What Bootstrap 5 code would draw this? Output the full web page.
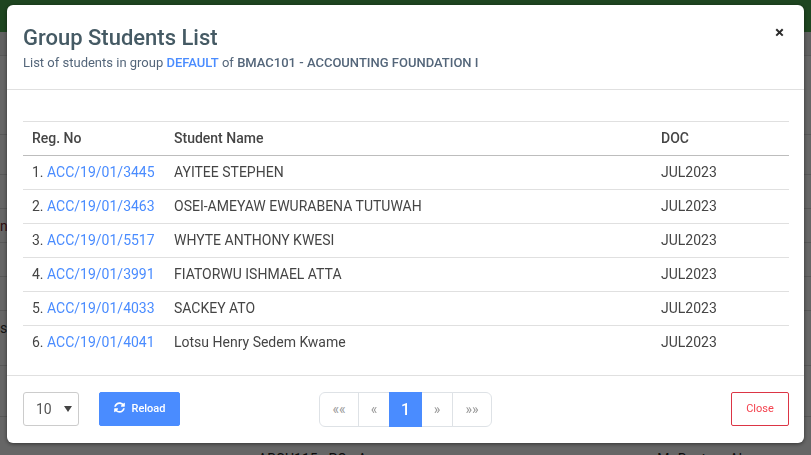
<!DOCTYPE html>
<html lang="en">
<head>
<meta charset="utf-8">
<title>Group Students List</title>
<link rel="stylesheet" href="https://cdn.jsdelivr.net/npm/bootstrap@5.3.0/dist/css/bootstrap.min.css">
<style>
html,body{height:455px;overflow:hidden;background:#fff;font-family:Roboto,"Liberation Sans",sans-serif;}
.pg-top{height:32px;background:#4bad50;}
.pg-strip{height:24px;border-bottom:1px solid #ddd;background:#f2f2f2;}
.pg-rows>div{border-bottom:1px solid #ddd;color:#333;font-size:14px;line-height:18px;white-space:nowrap;overflow:hidden;}
.pg-rows .h1x{height:79px;} .pg-rows .h2x{height:40px;} .pg-rows .h3x{height:34px;} .pg-rows .h4x{height:55px;} .pg-rows .h5x{height:51px;}
.pg-cut{padding-top:8px;}
.pg-cut span{color:#7a1f2a;}
.pg-last{display:flex;padding:32px 0 0 258px;font-size:14px;color:#222;white-space:nowrap;}
.pg-last span:last-child{margin-left:283px;}
.modal-backdrop.show{opacity:.6;}
.dlg.modal-dialog{max-width:797px;width:797px;margin:5px auto 0;}
.dlg .modal-content{height:438px;border:0;border-radius:6px;box-shadow:0 1px 4px rgba(0,0,0,.5);}
.dlg .modal-header{height:85px;padding:0 16px;align-items:flex-start;border-bottom:1px solid #e0e0e0;}
.dlg-title{margin:19px 0 0;font-size:22px;font-weight:500;line-height:28px;color:#455a64;}
.dlg-sub{margin:2px 0 0;font-size:13px;line-height:18px;color:#54667a;}
.dlg-sub b{font-weight:500;}
.dlg-sub .grp{color:#4a8cff;}
.dlg-x{border:0;background:none;padding:0;margin:17px 4px 0 0;color:#2b2b2b;font-size:17px;font-weight:700;line-height:20px;}
.dlg .modal-body{padding:31px 16px 0;flex:1 1 auto;}
.stud{margin:0;font-size:14px;color:#454545;table-layout:fixed;width:766px;}
.stud th,.stud td{padding:0 9px 2px;height:34px;vertical-align:middle;border-top:1px solid #e0e0e0;border-bottom:0;font-weight:400;line-height:20px;}
.stud thead th{font-weight:500;color:#454545;height:34px;border-bottom:1px solid #bdbdbd;}
.stud a{color:#4a8cff;text-decoration:none;}
.dlg .modal-footer{display:grid;grid-template-columns:1fr auto 1fr;padding:16px 16px 0;height:68px;align-items:start;border-top:1px solid #e0e0e0;margin:0;}
.dlg .modal-footer>*{margin:0;}
.sel{width:56px;height:34px;padding:0 0 0 12px;font-size:14px;color:#555;border:1px solid #ccc;border-radius:3px;appearance:none;background:#fff url("data:image/svg+xml,%3Csvg xmlns='http://www.w3.org/2000/svg' width='8' height='6'%3E%3Cpath d='M0 0h8L4 6z' fill='%23444'/%3E%3C/svg%3E") no-repeat right 6px center;}
.foot-l{gap:20px;}
.rl{width:81px;height:34px;padding:0;background:#4a8cff;border:1px solid #4a8cff;color:#fff;font-size:11px;font-weight:500;border-radius:2px;}
.rl svg{width:11px;height:11px;margin:-2px 7px 0 0;vertical-align:middle;fill:#fff;}
.pgr{margin:0;}
.pgr .page-link{height:35px;display:flex;align-items:center;justify-content:center;padding:0;font-size:14px;color:#999;border-color:#dee2e6;}
.pgr .pw1 .page-link{width:40px;} .pgr .pw2 .page-link{width:32px;}
.pgr .active .page-link{width:33px;background:#4a8cff;border-color:#4a8cff;color:#fff;font-size:16px;font-weight:500;}
.cl{width:58px;height:34px;padding:0;margin-right:-1px;background:#fff;border:1px solid #dc3545;color:#f4434f;font-size:11px;border-radius:2px;}
</style>
</head>
<body>
<div class="pg-top"></div>
<div class="pg-strip"></div>
<div class="pg-rows">
<div class="h1x"></div>
<div class="h2x"></div>
<div class="h3x"></div>
<div class="h3x pg-cut"><span>n</span></div>
<div class="h3x"></div>
<div class="h3x"></div>
<div class="h4x pg-cut">s</div>
<div class="h5x"></div>
</div>
<div class="pg-last"><span>ABCU115 - PO - Ac</span><span>Mr Bentum Abeam</span></div>

<div class="modal-backdrop fade show"></div>
<div class="modal fade show d-block" tabindex="-1" role="dialog">
<div class="modal-dialog dlg">
<div class="modal-content">
<div class="modal-header">
<div class="flex-grow-1">
<h4 class="dlg-title">Group Students List</h4>
<p class="dlg-sub">List of students in group <b class="grp">DEFAULT</b> of <b>BMAC101 - ACCOUNTING FOUNDATION I</b></p>
</div>
<button type="button" class="dlg-x" aria-label="Close">×</button>
</div>
<div class="modal-body">
<table class="table stud">
<colgroup><col style="width:142px"><col style="width:487px"><col style="width:137px"></colgroup>
<thead><tr><th>Reg. No</th><th>Student Name</th><th>DOC</th></tr></thead>
<tbody>
<tr><td>1. <a href="#">ACC/19/01/3445</a></td><td>AYITEE STEPHEN</td><td>JUL2023</td></tr>
<tr><td>2. <a href="#">ACC/19/01/3463</a></td><td>OSEI-AMEYAW EWURABENA TUTUWAH</td><td>JUL2023</td></tr>
<tr><td>3. <a href="#">ACC/19/01/5517</a></td><td>WHYTE ANTHONY KWESI</td><td>JUL2023</td></tr>
<tr><td>4. <a href="#">ACC/19/01/3991</a></td><td>FIATORWU ISHMAEL ATTA</td><td>JUL2023</td></tr>
<tr><td>5. <a href="#">ACC/19/01/4033</a></td><td>SACKEY ATO</td><td>JUL2023</td></tr>
<tr><td>6. <a href="#">ACC/19/01/4041</a></td><td>Lotsu Henry Sedem Kwame</td><td>JUL2023</td></tr>
</tbody>
</table>
</div>
<div class="modal-footer">
<div class="d-flex foot-l justify-content-start">
<select class="sel" aria-label="Rows"><option>10</option><option>25</option></select>
<button type="button" class="btn rl"><svg viewBox="0 0 512 512"><path d="M370.72 133.28C339.458 104.008 298.888 87.962 255.848 88c-77.458.068-144.328 53.178-162.791 126.85-1.344 5.363-6.122 9.15-11.651 9.15H24.103c-7.498 0-13.194-6.807-11.807-14.176C33.933 94.924 134.813 8 256 8c66.448 0 126.791 26.136 171.315 68.685L463.03 40.97C478.149 25.851 504 36.559 504 57.941V192c0 13.255-10.745 24-24 24H345.941c-21.382 0-32.09-25.851-16.971-40.971l41.75-41.749zM32 296h134.059c21.382 0 32.09 25.851 16.971 40.971l-41.75 41.75c31.262 29.273 71.835 45.319 114.876 45.28 77.418-.07 144.315-53.144 162.787-126.849 1.344-5.363 6.122-9.15 11.651-9.15h57.304c7.498 0 13.194 6.807 11.807 14.176C478.067 417.076 377.187 504 256 504c-66.448 0-126.791-26.136-171.315-68.685L48.97 471.03C33.851 486.149 8 475.441 8 454.059V320c0-13.255 10.745-24 24-24z"/></svg>Reload</button>
</div>
<ul class="pagination pgr">
<li class="page-item pw1"><a class="page-link" href="#">««</a></li>
<li class="page-item pw2"><a class="page-link" href="#">«</a></li>
<li class="page-item active"><a class="page-link" href="#">1</a></li>
<li class="page-item pw2"><a class="page-link" href="#">»</a></li>
<li class="page-item pw1"><a class="page-link" href="#">»»</a></li>
</ul>
<div class="d-flex justify-content-end"><button type="button" class="btn cl">Close</button></div>
</div>
</div>
</div>
</div>
<script src="https://cdn.jsdelivr.net/npm/bootstrap@5.3.0/dist/js/bootstrap.bundle.min.js"></script>
</body>
</html>
